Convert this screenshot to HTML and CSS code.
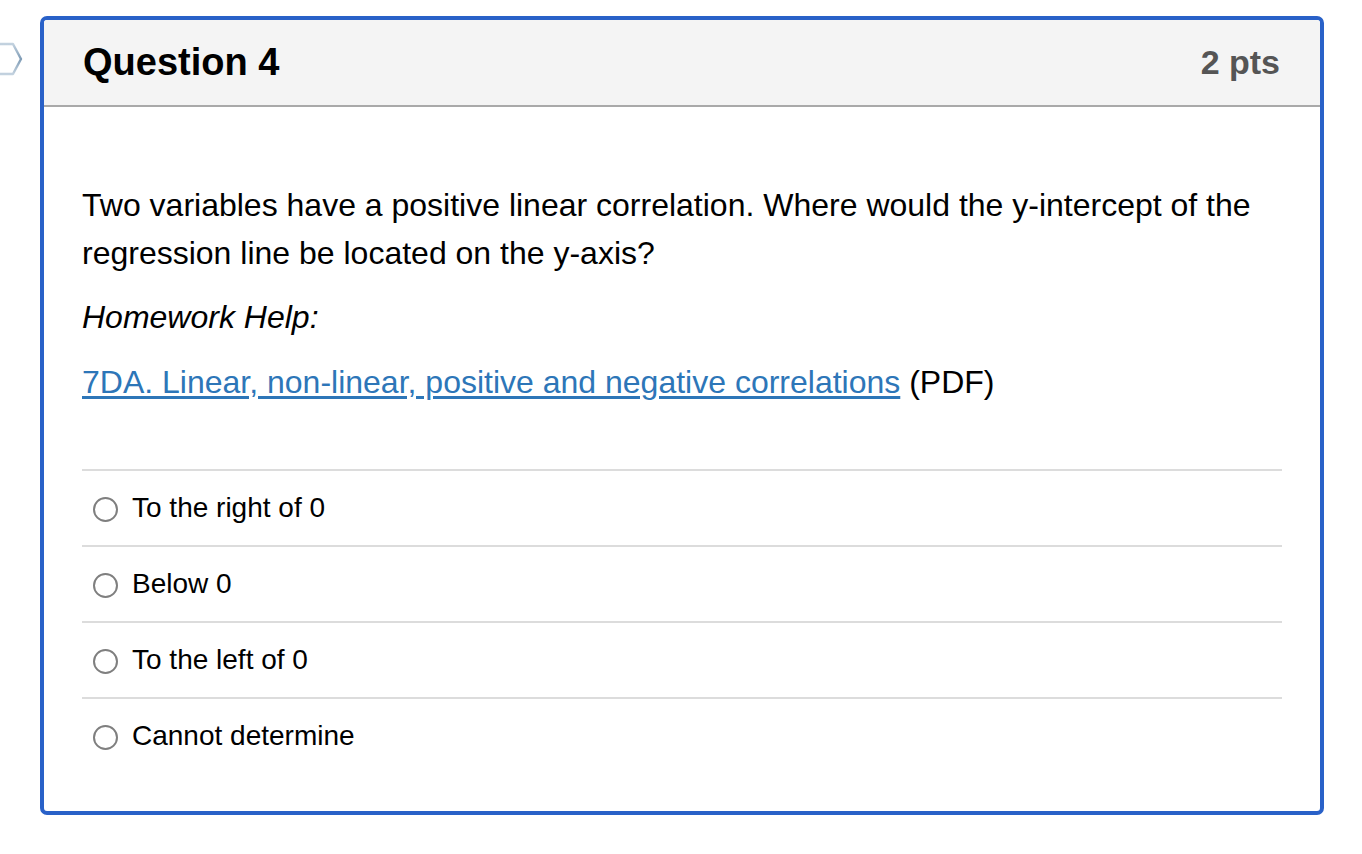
FILE: index.html
```html
<!DOCTYPE html>
<html>
<head>
<meta charset="utf-8">
<link rel="stylesheet" href="styles.css">
</head>
<body>
<div class="page">
  <svg class="flag" width="24" height="34" viewBox="0 0 24 34">
    <defs>
      <linearGradient id="fg" x1="0" y1="0" x2="0" y2="1">
        <stop offset="0" stop-color="#c3d2df"/>
        <stop offset="0.5" stop-color="#7f9cb6"/>
        <stop offset="1" stop-color="#c3d2df"/>
      </linearGradient>
    </defs>
    <path d="M-4 2 H13 L21 17 L13 32 H-4 Z" fill="#fff" stroke="url(#fg)" stroke-width="2.4" stroke-linejoin="round"/>
  </svg>
  <div class="card">
    <div class="card-header">
      <h2 class="title">Question 4</h2>
      <span class="points">2 pts</span>
    </div>
    <div class="card-body">
      <p class="question">Two variables have a positive linear correlation. Where would the y-intercept of the regression line be located on the y-axis?</p>
      <p class="help"><em>Homework Help:</em></p>
      <p class="ref"><a href="#">7DA. Linear, non-linear, positive and negative correlations</a> (PDF)</p>
      <div class="answers">
        <label class="answer"><span class="radio"></span><span class="answer-text">To the right of 0</span></label>
        <label class="answer"><span class="radio"></span><span class="answer-text">Below 0</span></label>
        <label class="answer"><span class="radio"></span><span class="answer-text">To the left of 0</span></label>
        <label class="answer"><span class="radio"></span><span class="answer-text">Cannot determine</span></label>
      </div>
    </div>
  </div>
</div>
</body>
</html>
```

FILE: styles.css
```css
html, body {
  margin: 0;
  padding: 0;
  background: #fff;
}
body {
  font-family: "Liberation Sans", Arial, Helvetica, sans-serif;
  color: #000;
}
.page {
  position: relative;
  padding: 16px 0 0 40px;
}
.flag {
  position: absolute;
  left: 0;
  top: 42px;
}
.card {
  box-sizing: border-box;
  width: 1284px;
  height: 799px;
  border: 4px solid #2961c8;
  border-radius: 7px;
  overflow: hidden;
}
.card-header {
  box-sizing: border-box;
  height: 87px;
  background: #f4f4f4;
  border-bottom: 2px solid #a9a9a9;
  display: flex;
  align-items: center;
  justify-content: space-between;
  padding: 0 40px 0 39px;
}
.title {
  margin: 0;
  font-size: 38px;
  font-weight: bold;
  color: #000;
}
.points {
  font-size: 34px;
  font-weight: bold;
  color: #555;
}
.card-body {
  padding: 74px 38px 0 38px;
}
.card-body p {
  margin: 0;
  font-size: 32px;
  line-height: 48px;
}
.help {
  margin-top: 16px !important;
}
.ref {
  margin-top: 17px !important;
}
.ref a {
  color: #2d76b8;
  text-decoration: underline;
  text-underline-offset: 3px;
}
.answers {
  margin-top: 63px;
}
.answer {
  display: flex;
  align-items: center;
  height: 74px;
  border-top: 2px solid #dcdcdc;
}
.radio {
  box-sizing: border-box;
  width: 25px;
  height: 25px;
  border: 2px solid #7f7f7f;
  border-radius: 50%;
  margin: 2px 14px 0 11px;
  background: #fff;
}
.answer-text {
  font-size: 28px;
}
```
